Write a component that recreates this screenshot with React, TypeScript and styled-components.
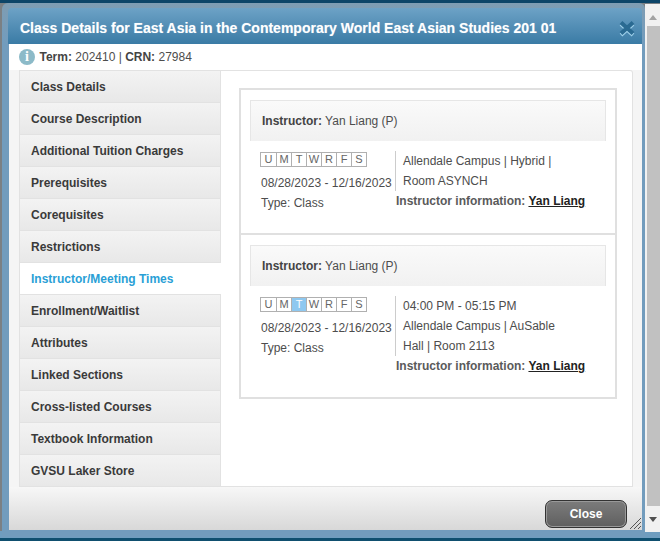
import React from 'react';
import styled, { createGlobalStyle } from 'styled-components';

const GlobalStyle = createGlobalStyle`
  html, body {
    margin: 0;
    padding: 0;
    overflow: hidden;
    font-family: "Liberation Sans", Arial, sans-serif;
    font-size: 12px;
    color: #4d4d4d;
  }
`;

const Page = styled.div`
  display: flex;
  width: 660px;
  height: 541px;
  background: linear-gradient(#0d4568 0 3px, #7b8084 3px 531px, #6f9dbf 531px 538px, #0f4f6f 538px);
`;

const Backdrop = styled.div`
  flex: 1;
  display: flex;
  flex-direction: column;
  padding-left: 2px;
`;

const Dialog = styled.div`
  display: flex;
  flex-direction: column;
  margin-top: 3px;
  height: 534px;
  padding: 5px 3px 7px 0;
  background: linear-gradient(#7f9db3, #729cbd 40px);
  border-radius: 6px 6px 0 0;
  box-sizing: border-box;
`;

const TitleBar = styled.div`
  display: flex;
  align-items: center;
  justify-content: space-between;
  flex: none;
  height: 36px;
  margin-left: 6px;
  padding: 3px 6px 0 12px;
  background: linear-gradient(#6da2c6, #3a7ba5);
  box-sizing: border-box;
  border-radius: 4px 4px 0 0;
  color: #fff;
  font-size: 14px;
  font-weight: bold;
`;

const Title = styled.span`
  text-shadow: 0 0 1px rgba(255, 255, 255, 0.4);
`;

const Body = styled.div`
  flex: 1;
  display: flex;
  flex-direction: column;
  margin-left: 7px;
  background: #f5f5f5;
`;

const TermBar = styled.div`
  display: flex;
  align-items: center;
  gap: 4.5px;
  height: 26px;
  padding-left: 10px;
  background: #fff;
  color: #4d4d4d;
`;

const InfoIcon = styled.span`
  display: flex;
  align-items: center;
  justify-content: center;
  width: 16px;
  height: 16px;
  border-radius: 50%;
  background: #8cbac8;
  color: #fff;
  font-family: "Liberation Serif", serif;
  font-size: 14px;
  font-weight: bold;
`;

const Strong = styled.b`
  color: #444;
`;

const Panel = styled.div`
  display: flex;
  height: 417px;
  margin: 0 9px 0 10px;
  background: #fff;
  border: 1px solid #e2e2e2;
  border-width: 1px 1px 1px 0;
  border-radius: 0 3px 0 0;
  box-sizing: border-box;
`;

const Side = styled.ul`
  flex: 0 0 202px;
  margin: 0;
  padding: 0;
  list-style: none;
  border-left: 1px solid #e2e2e2;
  border-right: 1px solid #e2e2e2;
  box-sizing: border-box;
`;

const SideItem = styled.li<{ $active?: boolean }>`
  height: 32px;
  padding: 1px 0 0 11px;
  line-height: 31px;
  box-sizing: border-box;
  font-weight: bold;
  color: ${({ $active }) => ($active ? '#2a9fd6' : '#3a3a3a')};
  background: ${({ $active }) => ($active ? '#fff' : 'linear-gradient(#f3f3f3, #e8e8e8)')};
  border-bottom: 1px solid #e2e2e2;
  margin-right: ${({ $active }) => ($active ? '-1px' : '0')};
  position: relative;
`;

const Content = styled.div`
  flex: 1;
  padding: 17px 15px 0 18px;
`;

const CardList = styled.div`
  border: 2px solid #e0e0e0;
`;

const Card = styled.div<{ $last?: boolean }>`
  height: ${({ $last }) => ($last ? '162px' : '145px')};
  padding-top: 10px;
  box-sizing: border-box;
  border-bottom: ${({ $last }) => ($last ? '0' : '2px solid #e0e0e0')};
`;

const CardHead = styled.div`
  height: 41px;
  margin: 0 9px;
  padding-left: 11px;
  line-height: 41px;
  background: linear-gradient(#fafafa, #f1f1f1);
  border: 1px solid #e6e6e6;
  border-bottom: 0;
  box-sizing: border-box;
`;

const Row = styled.div`
  display: grid;
  grid-template-columns: 135px 1fr;
  margin: 11px 0 0 19px;
`;

const LeftCol = styled.div`
  display: flex;
  flex-direction: column;
`;

const Days = styled.div`
  display: flex;
  width: fit-content;
  border: 1px solid #b0b0b0;
`;

const Day = styled.span<{ $on?: boolean }>`
  width: 15px;
  height: 13px;
  line-height: 13px;
  text-align: center;
  font-size: 11px;
  color: ${({ $on }) => ($on ? '#fff' : '#666')};
  background: ${({ $on }) => ($on ? '#8ec8f0' : '#fff')};
  box-sizing: border-box;
  & + & {
    border-left: 1px solid #b0b0b0;
  }
`;

const Line = styled.div`
  height: 20px;
  line-height: 20px;
  white-space: nowrap;
`;

const DateLine = styled(Line)`
  margin-top: 6px;
  margin-left: 1px;
`;

const TypeLine = styled(Line)`
  margin-left: 1px;
`;

const RightCol = styled.div`
  min-width: 0;
`;

const Where = styled.div`
  padding-left: 7px;
  border-left: 1px solid #ccc;
  margin-top: -1px;
`;

const InstructorInfo = styled(Line)`
  padding-left: 1px;
  font-weight: bold;
  color: #5a5a5a;
`;

const Link = styled.a`
  color: #222;
  text-decoration: underline;
`;

const Footer = styled.div`
  flex: 1;
  display: flex;
  align-items: flex-start;
  justify-content: flex-end;
  position: relative;
  padding: 13px 15px 0 0;
  background: linear-gradient(#f7f7f7, #d8d8d8);
`;

const CloseButton = styled.button`
  width: 82px;
  height: 28px;
  border: 1px solid #333;
  border-radius: 7px;
  background: linear-gradient(#7c7c7c, #5f5f5f);
  color: #fff;
  font: bold 12px "Liberation Sans", Arial, sans-serif;
  box-shadow: inset 0 0 0 1px #999;
`;

const Grip = styled.svg`
  position: absolute;
  right: 0;
  bottom: 0;
`;

const Scrollbar = styled.div`
  flex: 0 0 15px;
  display: flex;
  flex-direction: column;
  margin: 4px 0 9px;
  background: #f1f1f1;
`;

const ScrollArrow = styled.div`
  height: 18px;
  display: flex;
  align-items: center;
  justify-content: center;
  flex: none;
`;

const TopArrow = styled(ScrollArrow)`
  padding-top: 4px;
`;

const BottomArrow = styled(ScrollArrow)`
  height: 26px;
`;

const ScrollTrack = styled.div`
  flex: 1;
  margin-left: 2px;
  background: #c1c1c1;
`;

const days = ['U', 'M', 'T', 'W', 'R', 'F', 'S'];
const tabs = [
  'Class Details',
  'Course Description',
  'Additional Tuition Charges',
  'Prerequisites',
  'Corequisites',
  'Restrictions',
  'Instructor/Meeting Times',
  'Enrollment/Waitlist',
  'Attributes',
  'Linked Sections',
  'Cross-listed Courses',
  'Textbook Information',
  'GVSU Laker Store',
];

const Meeting: React.FC<{ lines: string[]; onDay?: string; last?: boolean }> = ({ lines, onDay, last }) => (
  <Card $last={last}>
    <CardHead>
      <Strong>Instructor:</Strong> Yan Liang (P)
    </CardHead>
    <Row>
      <LeftCol>
        <Days>
          {days.map((d) => (
            <Day key={d} $on={d === onDay}>{d}</Day>
          ))}
        </Days>
        <DateLine>08/28/2023 - 12/16/2023</DateLine>
        <TypeLine>Type: Class</TypeLine>
      </LeftCol>
      <RightCol>
        <Where>
          {lines.map((l) => (
            <Line key={l}>{l}</Line>
          ))}
        </Where>
        <InstructorInfo>
          Instructor information: <Link>Yan Liang</Link>
        </InstructorInfo>
      </RightCol>
    </Row>
  </Card>
);

export default function App() {
  return (
    <Page>
      <GlobalStyle />
      <Backdrop>
        <Dialog>
          <TitleBar>
            <Title>Class Details for East Asia in the Contemporary World East Asian Studies 201 01</Title>
            <svg width="18" height="18" viewBox="0 0 18 18">
              <path d="M3 5 L15 16 M15 5 L3 16" stroke="#9fd0ea" strokeWidth="4" />
              <path d="M3 3.5 L15 14.5 M15 3.5 L3 14.5" stroke="#2a6a92" strokeWidth="4" />
            </svg>
          </TitleBar>
          <Body>
            <TermBar>
              <InfoIcon>i</InfoIcon>
              <span>
                <Strong>Term:</Strong> 202410 | <Strong>CRN:</Strong> 27984
              </span>
            </TermBar>
            <Panel>
              <Side>
                {tabs.map((t) => (
                  <SideItem key={t} $active={t === 'Instructor/Meeting Times'}>{t}</SideItem>
                ))}
              </Side>
              <Content>
                <CardList>
                  <Meeting lines={['Allendale Campus | Hybrid |', 'Room ASYNCH']} />
                  <Meeting
                    last
                    onDay="T"
                    lines={['04:00 PM - 05:15 PM', 'Allendale Campus | AuSable', 'Hall | Room 2113']}
                  />
                </CardList>
              </Content>
            </Panel>
            <Footer>
              <CloseButton>Close</CloseButton>
              <Grip width="13" height="13" viewBox="0 0 13 13">
                <path d="M1 12 L12 1 M5 12 L12 5 M9 12 L12 9" stroke="#555" strokeWidth="1" />
              </Grip>
            </Footer>
          </Body>
        </Dialog>
      </Backdrop>
      <Scrollbar>
        <TopArrow>
          <svg width="8" height="5" viewBox="0 0 8 5"><path d="M4 0 L8 5 H0 Z" fill="#a3a3a3" /></svg>
        </TopArrow>
        <ScrollTrack />
        <BottomArrow>
          <svg width="8" height="5" viewBox="0 0 8 5"><path d="M0 0 H8 L4 5 Z" fill="#505050" /></svg>
        </BottomArrow>
      </Scrollbar>
    </Page>
  );
}
